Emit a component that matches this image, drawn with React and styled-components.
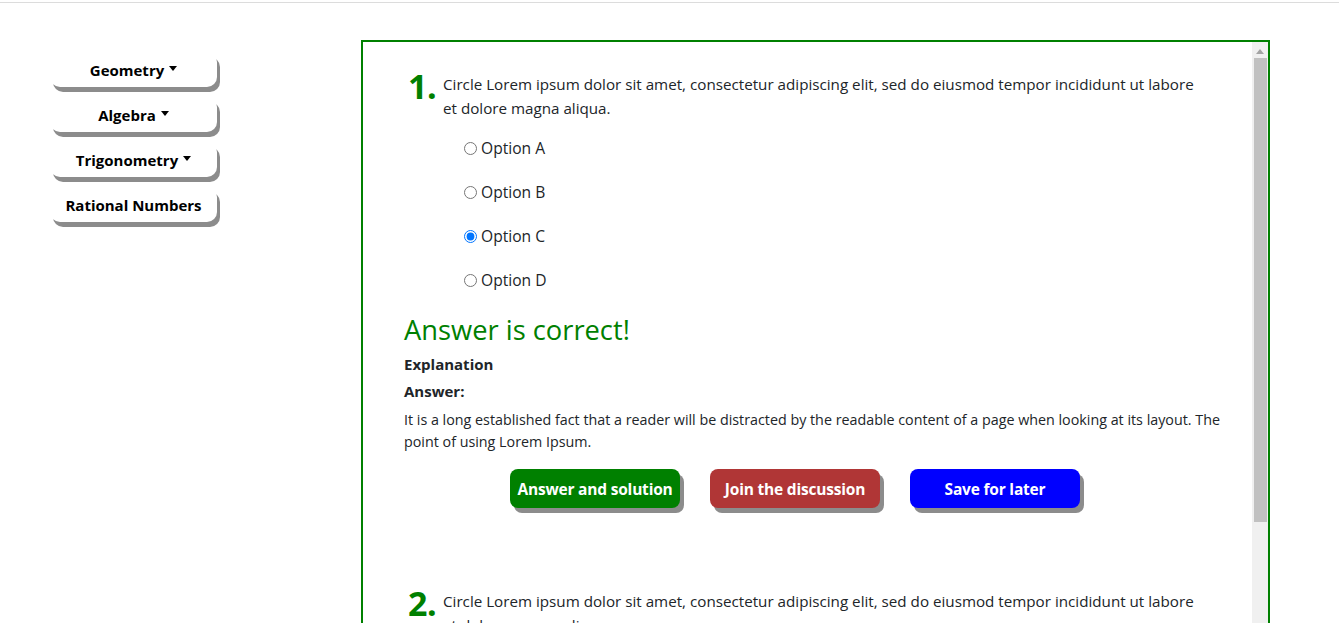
import React from 'react';
import styled, { createGlobalStyle } from 'styled-components';

const Global = createGlobalStyle`
  html, body { margin: 0; padding: 0; background: #fff; overflow: hidden; }
  body { font-family: "Open Sans", "Noto Sans", sans-serif; color: #212529; }
  * { box-sizing: border-box; }
`;

const TopBar = styled.header`
  height: 3px;
  border-bottom: 1px solid #dcdcdc;
`;

const Layout = styled.div`
  display: flex;
  align-items: flex-start;
  gap: 143px;
  padding: 37px 0 0 50px;
`;

const Sidebar = styled.nav`
  width: 168px;
  padding-top: 12px;
  display: flex;
  flex-direction: column;
  gap: 10px;
`;

const SideButton = styled.button`
  width: 167px;
  height: 35px;
  border: none;
  border-radius: 10px;
  background: #fff;
  box-shadow: 3px 5px 0 #8c8c8c;
  color: #000;
  font-family: "Open Sans", sans-serif;
  font-weight: 700;
  font-size: 15px;
  display: flex;
  align-items: center;
  justify-content: center;
  padding: 0;
  cursor: pointer;
`;

const Caret = styled.span`
  display: inline-block;
  margin-left: 5px;
  margin-bottom: 3px;
  border-top: 5px solid #000;
  border-left: 4px solid transparent;
  border-right: 4px solid transparent;
`;

const QuestionBox = styled.section`
  width: 909px;
  height: 600px;
  border: 2px solid #008000;
  display: flex;
  overflow: hidden;
`;

const Content = styled.div`
  flex: 1;
  overflow: hidden;
`;

const Scrollbar = styled.div`
  width: 16px;
  background: #f0f0f0;
  display: flex;
  flex-direction: column;
  align-items: center;
`;

const ScrollArrow = styled.div`
  height: 16px;
  width: 100%;
  display: flex;
  align-items: center;
  justify-content: center;
  padding-top: 2px;
`;

const Thumb = styled.div`
  width: 13px;
  margin-left: 1px;
  height: 464px;
  background: #c1c1c1;
`;

const Card = styled.article`
  padding: ${p => p.$top}px 0 78px 41px;
`;

const QuestionRow = styled.div`
  display: flex;
  align-items: flex-start;
  padding-left: 4px;
`;

const Number = styled.div`
  width: 35px;
  flex: none;
  color: #008000;
  font-weight: 700;
  font-size: 34px;
  line-height: 1;
  letter-spacing: -0.5px;
`;

const QuestionText = styled.p`
  margin: 3px 0 0;
  width: 760px;
  font-size: 15.2px;
  line-height: 24px;
  color: #212529;
`;

const Options = styled.div`
  margin-top: 6px;
  padding-left: 60px;
  display: flex;
  flex-direction: column;
`;

const OptionRow = styled.label`
  height: 44px;
  display: flex;
  align-items: center;
  gap: 4px;
  font-size: 15.6px;
  color: #212529;
`;

const Radio = styled.input`
  margin: 0;
  width: 13px;
  height: 13px;
`;

const AnswerTitle = styled.h3`
  margin: 11px 0 0;
  color: #008000;
  font-weight: 500;
  font-size: 27.3px;
  line-height: 34px;
`;

const Label = styled.div`
  margin-top: ${p => p.$gap}px;
  font-weight: 700;
  font-size: 15px;
  line-height: 24px;
  color: #212529;
`;

const Explanation = styled.p`
  margin: 6px 0 0;
  width: 835px;
  font-size: 14.3px;
  line-height: 22px;
  color: #212529;
`;

const Actions = styled.div`
  margin-top: 16px;
  padding-left: 106px;
  display: flex;
  gap: 30px;
`;

const ActionButton = styled.button`
  width: 170px;
  height: 39px;
  border: none;
  border-radius: 8px;
  background: ${p => p.$bg};
  box-shadow: 4px 5px 0 #8c8c8c;
  color: #fff;
  font-family: "Open Sans", sans-serif;
  font-weight: 700;
  font-size: 15.5px;
  letter-spacing: -0.2px;
  padding: 0;
  cursor: pointer;
`;

const questionText =
  'Circle Lorem ipsum dolor sit amet, consectetur adipiscing elit, sed do eiusmod tempor incididunt ut labore et dolore magna aliqua.';

function Question({ n, top, selected, showAnswer }) {
  return (
    <Card $top={top}>
      <QuestionRow>
        <Number>{n}.</Number>
        <QuestionText>{questionText}</QuestionText>
      </QuestionRow>
      <Options>
        {['A', 'B', 'C', 'D'].map(o => (
          <OptionRow key={o}>
            <Radio type="radio" name={`q${n}`} defaultChecked={selected === o} />
            Option {o}
          </OptionRow>
        ))}
      </Options>
      {showAnswer && (
        <>
          <AnswerTitle>Answer is correct!</AnswerTitle>
          <Label $gap={5}>Explanation</Label>
          <Label $gap={3}>Answer:</Label>
          <Explanation>
            It is a long established fact that a reader will be distracted by the readable content of a page when looking at its layout. The point of using Lorem Ipsum.
          </Explanation>
          <Actions>
            <ActionButton $bg="#008000">Answer and solution</ActionButton>
            <ActionButton $bg="#b03636">Join the discussion</ActionButton>
            <ActionButton $bg="#0000ff">Save for later</ActionButton>
          </Actions>
        </>
      )}
    </Card>
  );
}

export default function App() {
  return (
    <>
      <Global />
      <TopBar />
      <Layout>
        <Sidebar>
          <SideButton>Geometry<Caret /></SideButton>
          <SideButton>Algebra<Caret /></SideButton>
          <SideButton>Trigonometry<Caret /></SideButton>
          <SideButton>Rational Numbers</SideButton>
        </Sidebar>
        <QuestionBox>
          <Content>
            <Question n={1} top={27} selected="C" showAnswer />
            <Question n={2} top={0} />
          </Content>
          <Scrollbar>
            <ScrollArrow>
              <svg width="8" height="5" viewBox="0 0 8 5"><path d="M0 5 L4 0 L8 5 Z" fill="#a3a3a3" /></svg>
            </ScrollArrow>
            <Thumb />
          </Scrollbar>
        </QuestionBox>
      </Layout>
    </>
  );
}
